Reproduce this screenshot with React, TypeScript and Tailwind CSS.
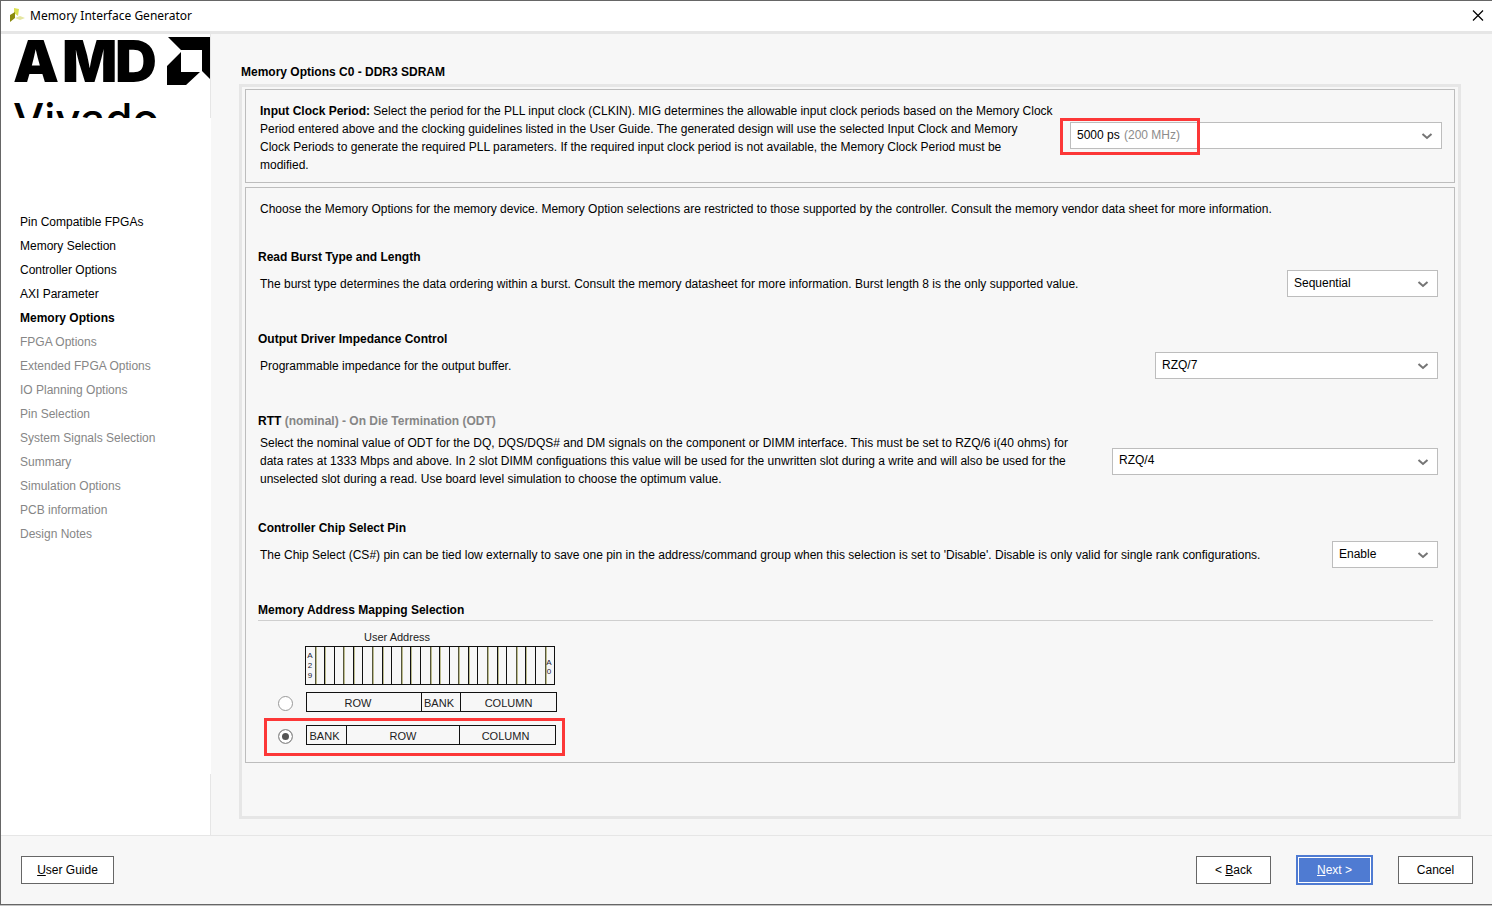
import React, { useState } from 'react';

const steps = [
    "Pin Compatible FPGAs",
    "Memory Selection",
    "Controller Options",
    "AXI Parameter",
    "Memory Options",
    "FPGA Options",
    "Extended FPGA Options",
    "IO Planning Options",
    "Pin Selection",
    "System Signals Selection",
    "Summary",
    "Simulation Options",
    "PCB information",
    "Design Notes"
];
const currentStep = 4;

const options = [
    {
        id: "burst",
        title: "Read Burst Type and Length",
        text: "The burst type determines the data ordering within a burst. Consult the memory datasheet for more information. Burst length 8 is the only supported value.",
        values: ["Sequential", "Interleaved"],
        width: "w-[151px]",
        gap: "mb-[33px]"
    },
    {
        id: "impedance",
        title: "Output Driver Impedance Control",
        text: "Programmable impedance for the output buffer.",
        values: ["RZQ/7", "RZQ/6"],
        width: "w-[283px]",
        gap: "mb-[33px]"
    },
    {
        id: "rtt",
        title: "RTT",
        note: "(nominal) - On Die Termination (ODT)",
        text: "Select the nominal value of ODT for the DQ, DQS/DQS# and DM signals on the component or DIMM interface. This must be set to RZQ/6 i(40 ohms) for data rates at 1333 Mbps and above. In 2 slot DIMM configuations this value will be used for the unwritten slot during a write and will also be used for the unselected slot during a read. Use board level simulation to choose the optimum value.",
        values: ["RZQ/4", "RZQ/2", "RZQ/6"],
        width: "w-[326px]",
        gap: "mb-[31px]"
    },
    {
        id: "chip-select",
        title: "Controller Chip Select Pin",
        text: "The Chip Select (CS#) pin can be tied low externally to save one pin in the address/command group when this selection is set to 'Disable'. Disable is only valid for single rank configurations.",
        values: ["Enable", "Disable"],
        width: "w-[106px]",
        gap: "mb-[33px]"
    }
];

const mappings = [
    {
        id: "row-bank-column",
        parts: [
            { name: "ROW", width: "w-[115px] pr-3" },
            { name: "BANK", width: "w-[39px] pr-1" },
            { name: "COLUMN", width: "w-[96px]" }
        ]
    },
    {
        id: "bank-row-column",
        parts: [
            { name: "BANK", width: "w-[40px] pr-1" },
            { name: "ROW", width: "w-[113px]" },
            { name: "COLUMN", width: "w-[96px] pr-1" }
        ]
    }
];

const Dropdown = ({ id, label, values, suffix }: { id: string; label: string; values: string[]; suffix?: string }) => (
    <div className="relative w-full">
        <select
            id={id}
            aria-label={label}
            className="block w-full h-[27px] appearance-none border border-[#bdbdbd] bg-white pl-[6px] pr-6 pb-[2px] text-black rounded-none outline-none"
        >
            {values.map((value) => (
                <option key={value}>{value}</option>
            ))}
        </select>
        {suffix && (
            <span className="absolute left-[54px] top-1 leading-[18px] text-[#8c8c8c] pointer-events-none">{suffix}</span>
        )}
        <svg className="absolute right-[9px] top-[11px] pointer-events-none" width="12" height="7" viewBox="0 0 12 7" fill="none">
            <path d="M1.5 1L6 5L10.5 1" stroke="#757575" strokeWidth="2" />
        </svg>
    </div>
);

const TitleBar = () => (
    <header className="flex items-center h-[33px] bg-white border-b-[3px] border-[#e6e6e6] pl-2 pr-[8px]">
        <svg width="16" height="16" viewBox="0 0 16 16">
            <path d="M5 0L10 1L9 8L5 5Z" fill="#dbe052" />
            <path d="M1 7L6 4V10L1 14Z" fill="#8a8a0c" />
            <path d="M6 10L11 8L16 10L11 12Z" fill="#e5e6a2" />
        </svg>
        <h1 className="ml-[5px] font-['Noto_Sans',sans-serif] text-[12px] leading-4">Memory Interface Generator</h1>
        <button type="button" aria-label="Close" className="ml-auto">
            <svg width="12" height="12" viewBox="0 0 12 12">
                <path d="M1 0.5L11 10.5M11 0.5L1 10.5" stroke="#000" strokeWidth="1.2" />
            </svg>
        </button>
    </header>
);

const Sidebar = () => (
    <aside className="w-[210px] shrink-0 flex flex-col bg-white">
        <div className="h-[84px] overflow-hidden border-r border-[#e6e6e6]">
            <svg width="209" height="84" viewBox="0 0 209 84">
                <text x="12 61 114" y="48" fontFamily="Inter, sans-serif" fontWeight="900" fontSize="58">AMD</text>
                <path d="M167 3H209V45L201 37V16H180Z" />
                <path d="M180 18V38H199L185 51H166V32Z" />
                <text x="12" y="101" fontFamily="Inter, sans-serif" fontWeight="500" fontSize="44">Vivado</text>
            </svg>
        </div>
        <nav className="mt-[92px] pl-[19px]">
            <ol>
                {steps.map((step, index) => (
                    <li
                        key={step}
                        className={
                            index === currentStep
                                ? "leading-6 font-bold text-black"
                                : index < currentStep
                                    ? "leading-6 text-black"
                                    : "leading-6 text-[#868686]"
                        }
                    >
                        {step}
                    </li>
                ))}
            </ol>
        </nav>
        <div className="mt-auto h-[61px] border-r border-[#e6e6e6]"></div>
    </aside>
);

const AddressBits = () => (
    <svg width="250" height="56" viewBox="0 0 250 56" className="block" fontFamily="'Liberation Sans', Arial, sans-serif">
        <text x="92" y="11" textAnchor="middle" fontSize="11" fill="#222">User Address</text>
        {Array.from({ length: 25 }, (_, i) => Math.round((i + 1) * 9.58)).map((x, i) => (
            <g key={x}>
                <path d={`M${x + 0.5} 17V55`} stroke={i % 3 === 0 ? "#55553a" : "#111"} />
                {i % 3 !== 2 && <path d={`M${x + 1.5} 17V55`} stroke="#a3a362" strokeOpacity="0.7" />}
            </g>
        ))}
        <rect x="0.5" y="16.5" width="249" height="38" fill="none" stroke="#111" />
        <g fontSize="8" textAnchor="middle" fill="#223">
            <text x="5" y="28">A</text>
            <text x="5" y="38">2</text>
            <text x="5" y="48">9</text>
            <text x="244" y="35">A</text>
            <text x="244" y="44">0</text>
        </g>
    </svg>
);

const AddressMapping = () => {
    const [mapping, setMapping] = useState("bank-row-column");

    return (
        <fieldset>
            <legend className="block w-full font-bold leading-[18px]">Memory Address Mapping Selection</legend>
            <div className="mt-px border-t border-[#cfcfcf] mr-[21px]"></div>
            <div className="mt-[9px] ml-[47px]">
                <AddressBits />
            </div>
            <div className="mt-[6px] ml-[6px] space-y-[13px]">
                {mappings.map((item) => (
                    <div key={item.id} className="relative flex items-center h-5 pl-[14px]">
                        <input
                            type="radio"
                            id={item.id}
                            name="mapping"
                            checked={mapping === item.id}
                            onChange={() => setMapping(item.id)}
                            className="appearance-none size-[15px] mt-[2px] rounded-full border border-[#999] bg-white checked:bg-[#555] checked:shadow-[inset_0_0_0_3px_white]"
                        />
                        <label htmlFor={item.id} className="ml-[13px] flex h-5 border border-r-0 border-[#111] text-[11px] leading-[20px] text-[#222] text-center">
                            {item.parts.map((part) => (
                                <span key={part.name} className={`${part.width} border-r border-[#111]`}>{part.name}</span>
                            ))}
                        </label>
                        {item.id === "bank-row-column" && (
                            <div className="absolute left-0 -top-[7px] w-[301px] h-[38px] border-[3px] border-[#fc3737] pointer-events-none"></div>
                        )}
                    </div>
                ))}
            </div>
        </fieldset>
    );
};

const buttonClass = "h-7 border border-[#666] bg-white pb-px";

const App = () => {
    return (
        <div className="min-h-screen flex flex-col bg-[#c4c4c4] pb-px font-['Liberation_Sans',Arial,sans-serif] text-[12px] leading-[18px] text-black">
            <div className="flex-1 flex flex-col bg-[#f7f7f7] border-t border-l border-b border-[#666]">
                <TitleBar />
                <div className="flex-1 flex">
                    <Sidebar />
                    <main className="flex-1 min-w-0 flex flex-col pl-7 pr-[31px] pt-[29px] pb-4">
                        <h2 className="font-bold pl-[2px] mb-[3px]">Memory Options C0 - DDR3 SDRAM</h2>
                        <div className="flex-1 border-[3px] border-[#e6e6e6] px-[3px] pt-[2px]">
                            <section className="flex border border-[#bdbdbd] pl-[14px] pr-3 pt-3 pb-2">
                                <p className="w-[810px] shrink-0">
                                    <b>Input Clock Period:</b> Select the period for the PLL input clock (CLKIN). MIG determines the allowable input clock periods based on the Memory Clock<br />
                                    Period entered above and the clocking guidelines listed in the User Guide. The generated design will use the selected Input Clock and Memory<br />
                                    Clock Periods to generate the required PLL parameters. If the required input clock period is not available, the Memory Clock Period must be<br />
                                    modified.
                                </p>
                                <div className="relative flex-1 mt-5">
                                    <Dropdown id="clock" label="Input Clock Period" values={["5000 ps"]} suffix="(200 MHz)" />
                                    <div className="absolute -left-[10px] -top-1 w-[140px] h-[37px] border-[3px] border-[#fc3737] pointer-events-none"></div>
                                </div>
                            </section>
                            <section className="mt-1 border border-[#bdbdbd] pl-3 pt-3 pb-[17px]">
                                <p className="pl-[2px] mb-[30px]">
                                    Choose the Memory Options for the memory device. Memory Option selections are restricted to those supported by the controller. Consult the memory vendor data sheet for more information.
                                </p>
                                {options.map((option) => (
                                    <div key={option.id} className={`${option.gap} pr-4`}>
                                        <h3 className="font-bold">
                                            {option.title} {option.note && <span className="text-[#868686]">{option.note}</span>}
                                        </h3>
                                        <div className="mt-1 flex items-center justify-between">
                                            <p className="pl-[2px] pr-5">{option.text}</p>
                                            <div className={`${option.width} shrink-0`}>
                                                <Dropdown id={option.id} label={option.title} values={option.values} />
                                            </div>
                                        </div>
                                    </div>
                                ))}
                                <AddressMapping />
                            </section>
                        </div>
                    </main>
                </div>
                <footer className="flex items-center h-[69px] border-t border-[#e6e6e6] pl-5 pr-[19px]">
                    <button type="button" className={`${buttonClass} w-[93px]`}><u>U</u>ser Guide</button>
                    <div className="ml-auto flex items-center gap-[25px]">
                        <button type="button" className={`${buttonClass} w-[75px]`}>&lt; <u>B</u>ack</button>
                        <button type="button" className="w-[77px] h-[30px] border-2 border-[#4f7bd2] bg-[#4f7bd2] text-white">
                            <span className="block h-[26px] border border-white leading-6"><u>N</u>ext &gt;</span>
                        </button>
                        <button type="button" className={`${buttonClass} w-[75px]`}>Cancel</button>
                    </div>
                </footer>
            </div>
        </div>
    );
};

export default App;
